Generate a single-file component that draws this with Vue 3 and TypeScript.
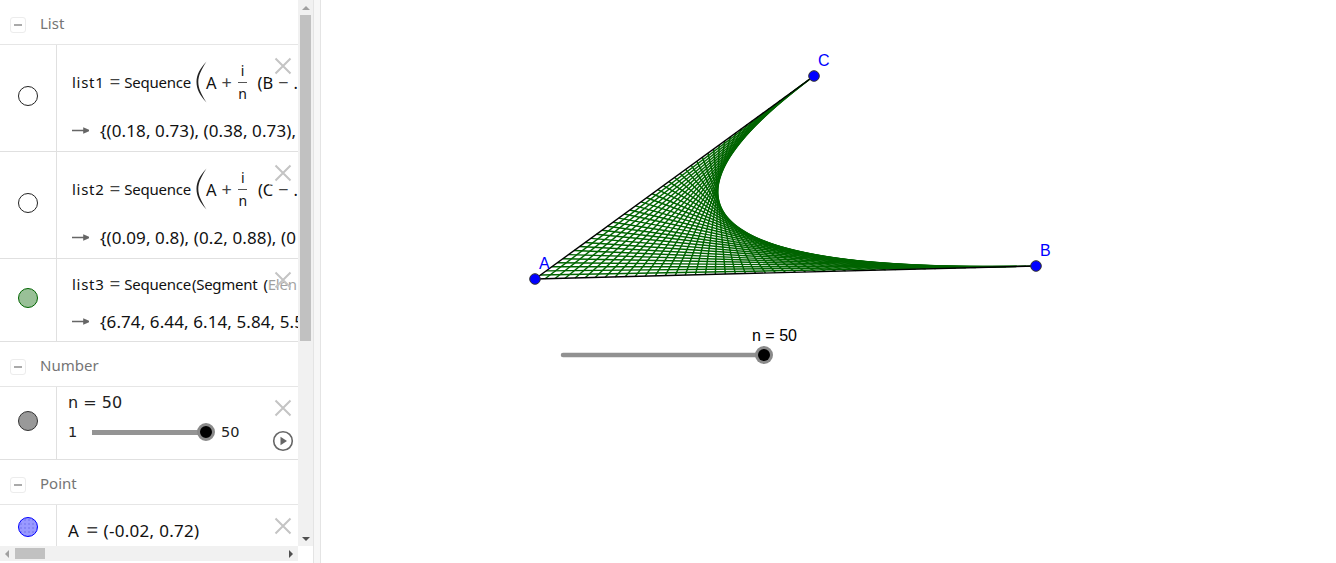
<script setup lang="ts">
interface Pt { x: number; y: number }
const A: Pt = { x: 535, y: 279 }
const B: Pt = { x: 1036, y: 266 }
const C: Pt = { x: 814, y: 76 }
const n = 50
const segs = Array.from({ length: n }, (_, k) => {
  const i = k + 1
  const j = n + 1 - i
  return {
    x1: A.x + (i / n) * (B.x - A.x),
    y1: A.y + (i / n) * (B.y - A.y),
    x2: A.x + (j / n) * (C.x - A.x),
    y2: A.y + (j / n) * (C.y - A.y),
  }
})
const points = [
  { ...A, name: 'A', lx: 539, ly: 269 },
  { ...B, name: 'B', lx: 1040, ly: 256 },
  { ...C, name: 'C', lx: 818, ly: 66 },
]
</script>

<template>
  <div class="app">
    <aside class="algebra">
      <div class="algebra-top">
        <div class="list">
          <div class="group">
            <span class="minus"><i></i></span><span class="gname">List</span>
          </div>

          <div class="row tall">
            <div class="marble-cell"><span class="marble"></span></div>
            <div class="content">
              <div class="formula tallf">
                <span class="lname">list1</span><span class="eq">=</span><span class="fn">Sequence</span>
                <svg class="paren" width="11" height="42" viewBox="0 0 11 42"><path d="M10.500 0.500C3.500 8 0.500 14 0.500 21s3 13 10 20.500C5 33 2.300 27 2.300 21S5 9 10.500 0.500Z" fill="#222" /></svg>
                <span class="big">A</span><span class="op">+</span>
                <span class="frac"><span>i</span><b></b><span>n</span></span>
                <span class="after big">(B</span><span class="op">−</span><span class="big">.</span>
              </div>
              <div class="result">
                <svg class="arrow" width="17" height="9" viewBox="0 0 17 9"><path d="M0 4.500H12M12 2.500L16.500 4.500L12 6.500Z" stroke="#666" stroke-width="1.600" fill="#666" /></svg>
                <span>{(0.18, 0.73), (0.38, 0.73),</span>
              </div>
            </div>
            <button class="close"><svg width="18" height="18" viewBox="0 0 18 18"><path d="M1.500 1.500L16.500 16.500M16.500 1.500L1.500 16.500" stroke="#c4c4c4" stroke-width="2" /></svg></button>
          </div>

          <div class="row tall">
            <div class="marble-cell"><span class="marble"></span></div>
            <div class="content">
              <div class="formula tallf">
                <span class="lname">list2</span><span class="eq">=</span><span class="fn">Sequence</span>
                <svg class="paren" width="11" height="42" viewBox="0 0 11 42"><path d="M10.500 0.500C3.500 8 0.500 14 0.500 21s3 13 10 20.500C5 33 2.300 27 2.300 21S5 9 10.500 0.500Z" fill="#222" /></svg>
                <span class="big">A</span><span class="op">+</span>
                <span class="frac"><span>i</span><b></b><span>n</span></span>
                <span class="after big">(C</span><span class="op">−</span><span class="big">.</span>
              </div>
              <div class="result">
                <svg class="arrow" width="17" height="9" viewBox="0 0 17 9"><path d="M0 4.500H12M12 2.500L16.500 4.500L12 6.500Z" stroke="#666" stroke-width="1.600" fill="#666" /></svg>
                <span>{(0.09, 0.8), (0.2, 0.88), (0</span>
              </div>
            </div>
            <button class="close"><svg width="18" height="18" viewBox="0 0 18 18"><path d="M1.500 1.500L16.500 16.500M16.500 1.500L1.500 16.500" stroke="#c4c4c4" stroke-width="2" /></svg></button>
          </div>

          <div class="row short">
            <div class="marble-cell"><span class="marble green"></span></div>
            <div class="content">
              <div class="formula">
                <span class="lname">list3</span><span class="eq">=</span><span class="fn">Sequence</span><span class="pl">(Segment</span><span class="pl second">(Elen</span>
              </div>
              <div class="result near">
                <svg class="arrow" width="17" height="9" viewBox="0 0 17 9"><path d="M0 4.500H12M12 2.500L16.500 4.500L12 6.500Z" stroke="#666" stroke-width="1.600" fill="#666" /></svg>
                <span>{6.74, 6.44, 6.14, 5.84, 5.5</span>
              </div>
            </div>
            <button class="close"><svg width="18" height="18" viewBox="0 0 18 18"><path d="M1.500 1.500L16.500 16.500M16.500 1.500L1.500 16.500" stroke="#c4c4c4" stroke-width="2" /></svg></button>
          </div>

          <div class="group">
            <span class="minus"><i></i></span><span class="gname">Number</span>
          </div>

          <div class="row num">
            <div class="marble-cell"><span class="marble gray"></span></div>
            <div class="content slider-content">
              <div class="num-title">n = 50</div>
              <div class="num-slider">
                <span class="lo">1</span>
                <span class="track"><span class="thumb"></span></span>
                <span class="hi">50</span>
              </div>
            </div>
            <button class="close"><svg width="18" height="18" viewBox="0 0 18 18"><path d="M1.500 1.500L16.500 16.500M16.500 1.500L1.500 16.500" stroke="#c4c4c4" stroke-width="2" /></svg></button>
            <button class="play"><svg width="22" height="22" viewBox="0 0 22 22"><circle cx="11" cy="11" r="9.300" fill="none" stroke="#666" stroke-width="1.600" /><path d="M8.500 6.800L15 11L8.500 15.200Z" fill="#666" /></svg></button>
          </div>

          <div class="group">
            <span class="minus"><i></i></span><span class="gname">Point</span>
          </div>

          <div class="row pt">
            <div class="marble-cell"><span class="marble blue"></span></div>
            <div class="content point-content">
              <span>A</span><span class="eq">=</span><span>(-0.02, 0.72)</span>
            </div>
            <button class="close"><svg width="18" height="18" viewBox="0 0 18 18"><path d="M1.500 1.500L16.500 16.500M16.500 1.500L1.500 16.500" stroke="#c4c4c4" stroke-width="2" /></svg></button>
          </div>
        </div>

        <div class="vscroll">
          <span class="tri up"></span>
          <span class="vthumb"></span>
          <span class="tri down"></span>
        </div>
      </div>
      <div class="hscroll">
        <span class="tri left"></span>
        <span class="hthumb"></span>
        <span class="tri right"></span>
      </div>
    </aside>

    <div class="splitter"></div>

    <main class="canvas">
      <svg class="board" width="1015" height="563" viewBox="321 0 1015 563">
        <line v-for="(s, k) in segs" :key="k" :x1="s.x1" :y1="s.y1" :x2="s.x2" :y2="s.y2" stroke="#006400" stroke-width="1.450" />
        <line :x1="A.x" :y1="A.y" :x2="C.x" :y2="C.y" stroke="#000" stroke-width="1.400" />
        <line :x1="A.x" :y1="A.y" :x2="B.x" :y2="B.y" stroke="#000" stroke-width="1.400" />
        <g v-for="p in points" :key="p.name">
          <circle :cx="p.x" :cy="p.y" r="5.300" fill="#0000ff" stroke="#333" stroke-width="1" />
          <text :x="p.lx" :y="p.ly" class="pt-label">{{ p.name }}</text>
        </g>
        <line x1="563" y1="355" x2="764" y2="355" stroke="#919191" stroke-width="4.500" stroke-linecap="round" />
        <circle cx="764" cy="355" r="9" fill="#8a8a8a" />
        <circle cx="764" cy="355" r="6" fill="#000" />
        <text x="752" y="340.500" class="sl-label">n = 50</text>
      </svg>
    </main>
  </div>
</template>

<style>
html, body { margin: 0; padding: 0; background: #fff; }
</style>

<style scoped>
.app {
  display: flex;
  width: 1336px;
  height: 563px;
  overflow: hidden;
  background: #fff;
  font-family: "Noto Sans", sans-serif;
}
.algebra {
  width: 313px;
  flex: none;
  display: flex;
  flex-direction: column;
  height: 561px;
}
.algebra-top {
  display: flex;
  height: 546px;
}
.list {
  width: 298px;
  overflow: hidden;
  flex: none;
}
.group {
  height: 45px;
  box-sizing: border-box;
  border-bottom: 1px solid #e6e6e6;
  display: flex;
  align-items: center;
  color: #757575;
  font-size: 15px;
  padding-left: 10px;
}
.gname { margin-top: 2px; }
.minus {
  width: 16px;
  height: 16px;
  box-sizing: border-box;
  border: 1px solid #ececec;
  border-radius: 3px;
  display: flex;
  align-items: center;
  justify-content: center;
  margin-right: 14px;
  margin-top: 6px;
}
.minus i {
  width: 8px;
  height: 1.500px;
  background: #aaa;
}
.row {
  position: relative;
  display: flex;
  box-sizing: border-box;
  border-bottom: 1px solid #e0e0e0;
}
.tall { height: 107px; }
.short { height: 83px; }
.num { height: 73px; }
.pt { height: 48px; border-bottom: 0; }
.marble-cell {
  width: 57px;
  flex: none;
  box-sizing: border-box;
  border-right: 1px solid #e0e0e0;
  display: flex;
  align-items: center;
  justify-content: center;
  padding-bottom: 4px;
}
.marble {
  width: 20px;
  height: 20px;
  box-sizing: border-box;
  border-radius: 50%;
  border: 1px solid #222;
  background: #fff;
}
.marble.green { background: #99c097; border-color: #006400; }
.marble.gray { background: #999; border-color: #333; }
.marble.blue {
  border-color: #0000ff;
  background-color: #9999ff;
  background-image: radial-gradient(#8585f5 0.7px, transparent 0.9px);
  background-size: 4px 4px;
}
.content {
  flex: 1;
  min-width: 0;
  overflow: hidden;
  padding: 12px 0 0 15px;
  color: #111;
  font-size: 15px;
  white-space: nowrap;
}
.formula {
  display: flex;
  align-items: center;
  height: 26px;
}
.formula.tallf { height: 50px; }
.lname { font-size: 15px; letter-spacing: 0.7px; }
.fn { font-size: 15px; letter-spacing: -0.25px; }
.big { font-size: 16.500px; }
.eq {
  margin: 0 4px 0 5px;
  color: #444;
  font-size: 19px;
  line-height: 1;
}
.op {
  margin: 0 5px;
  color: #444;
  font-size: 18px;
  line-height: 1;
}
.paren { margin: 0 -1px 0 5px; flex: none; }
.pl { margin-left: 1px; font-size: 15px; letter-spacing: -0.25px; }
.pl.second { margin-left: 6px; }
.frac {
  display: inline-flex;
  flex-direction: column;
  align-items: center;
  font-size: 14px;
  line-height: 16px;
  margin: 0 1px;
  width: 12px;
}
.frac b {
  width: 9px;
  height: 1px;
  background: #555;
  margin: 3px 0;
}
.after { margin-left: 9px; }
.result {
  display: flex;
  align-items: center;
  height: 24px;
  margin-top: 11px;
  font-size: 17px;
  letter-spacing: 0.1px;
}
.result.near { margin-top: 12px; }
.arrow { margin-right: 11px; flex: none; }
.close {
  position: absolute;
  right: 0;
  top: 5px;
  width: 29px;
  height: 28px;
  padding: 4px 0 0 5px;
  border: 0;
  background: rgba(255, 255, 255, 0.6);
  display: block;
  box-sizing: border-box;
}
.close svg { display: block; }
.play {
  position: absolute;
  left: 272px;
  top: 43px;
  padding: 0;
  border: 0;
  background: none;
  width: 22px;
  height: 22px;
}
.play svg { display: block; }
.content.slider-content { padding: 4px 0 0 11px; }
.num-title {
  height: 24px;
  line-height: 24px;
  font-family: "DejaVu Sans", sans-serif;
  font-size: 16px;
  color: #222;
}
.num-slider {
  display: flex;
  align-items: center;
  height: 26px;
  margin-top: 4px;
  font-family: "DejaVu Sans", sans-serif;
  font-size: 14.500px;
  color: #222;
}
.lo { width: 24px; }
.track {
  position: relative;
  width: 114px;
  height: 5px;
  background: #949494;
}
.thumb {
  position: absolute;
  right: -9px;
  top: -6.500px;
  width: 12px;
  height: 12px;
  border-radius: 50%;
  background: #000;
  border: 3px solid #8a8a8a;
}
.hi { margin-left: 15px; }
.content.point-content {
  display: flex;
  align-items: center;
  padding: 3px 0 0 11px;
  font-size: 17px;
  letter-spacing: 0.3px;
}
.point-content .eq { margin: 0 5px 0 7px; font-size: 21px; }
.vscroll {
  position: relative;
  width: 15px;
  flex: none;
  background: #f1f1f1;
}
.vthumb {
  position: absolute;
  left: 2px;
  top: 15px;
  width: 11px;
  height: 326px;
  background: #c1c1c1;
}
.hscroll {
  position: relative;
  width: 298px;
  height: 15px;
  background: #f1f1f1;
}
.hthumb {
  position: absolute;
  left: 15px;
  top: 2px;
  width: 30px;
  height: 11px;
  background: #c1c1c1;
}
.tri {
  position: absolute;
  width: 0;
  height: 0;
  border: 4px solid transparent;
}
.tri.up { top: 6px; left: 3.500px; border-bottom-color: #a0a0a0; border-top-width: 0; }
.tri.down { bottom: 5px; left: 3.500px; border-top-color: #505050; border-bottom-width: 0; }
.tri.left { left: 5px; top: 3.500px; border-right-color: #a0a0a0; border-left-width: 0; }
.tri.right { right: 5px; top: 3.500px; border-left-color: #505050; border-right-width: 0; }
.splitter {
  width: 8px;
  height: 563px;
  flex: none;
  box-sizing: border-box;
  background: #f7f7f7;
  border-left: 1px solid #e4e4e4;
  border-right: 1px solid #e4e4e4;
}
.canvas {
  flex: 1;
  min-width: 0;
  height: 563px;
}
.board { display: block; }
.pt-label {
  font-family: "Liberation Sans", sans-serif;
  font-size: 16px;
  fill: #0000ff;
}
.sl-label {
  font-family: "Liberation Sans", sans-serif;
  font-size: 16px;
  fill: #000;
}
</style>
